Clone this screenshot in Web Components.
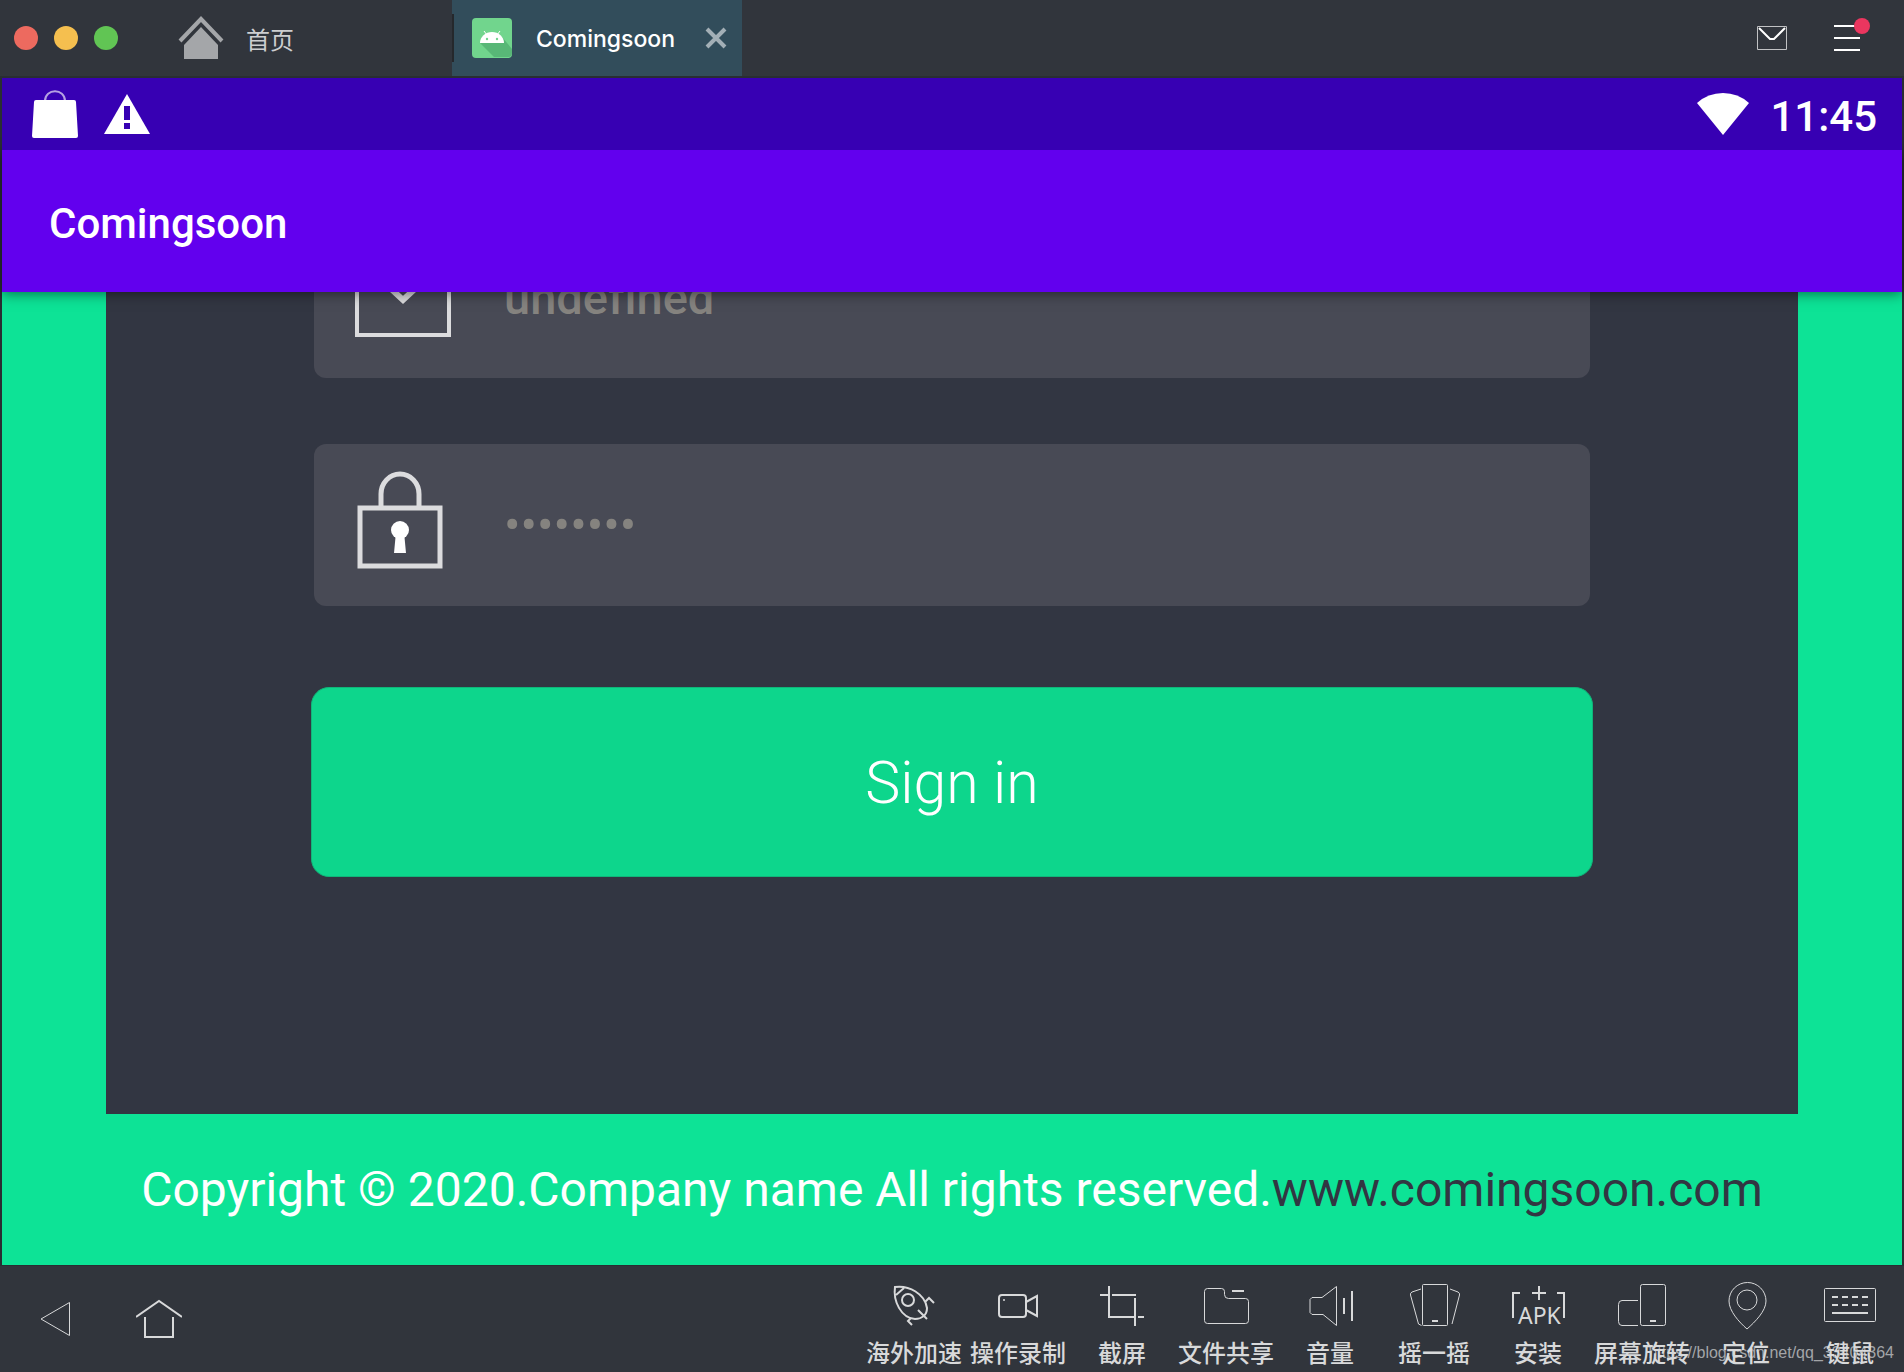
<!DOCTYPE html>
<html lang="zh-CN">
<head>
<meta charset="utf-8">
<title>Comingsoon</title>
<style>
body{
    margin: 0;
    background: #31353c;
    font-family: Roboto, "Noto Sans CJK SC", sans-serif;
}
</style>
</head>
<body>
<emulator-window>
    <title-bar slot="top"></title-bar>
    <status-bar slot="screen" time="11:45"></status-bar>
    <app-bar slot="screen">Comingsoon</app-bar>
    <login-page slot="screen"></login-page>
    <tool-bar slot="bottom"></tool-bar>
</emulator-window>

<script>
class EmulatorWindow extends HTMLElement{
    constructor(){
        super()
        this.attachShadow({mode: 'open'})
        this.shadowRoot.innerHTML = `
        <style>
        :host{
            display: flex;
            flex-direction: column;
            height: 100vh;
            overflow: hidden;
        }
        .screen{
            flex: 1;
            min-height: 0;
            display: flex;
            flex-direction: column;
            border: 2px solid #292e33;
            border-bottom-width: 1px;
        }
        </style>
        <slot name="top"></slot>
        <main class="screen"><slot name="screen"></slot></main>
        <slot name="bottom"></slot>
        `
    }
}

class TitleBar extends HTMLElement{
    constructor(){
        super()
        this.attachShadow({mode: 'open'})
        this.shadowRoot.innerHTML = `
        <style>
        :host{
            display: flex;
            height: 76px;
            flex: none;
            background: #31353c;
            color: #cdced0;
            font-size: 24px;
        }
        button{
            border: 0;
            padding: 0;
            background: none;
            color: inherit;
            font: inherit;
            display: flex;
            align-items: center;
        }
        svg{ display: block; flex: none; }
        .lights{
            display: flex;
            align-items: center;
            gap: 16px;
            padding-left: 14px;
            width: 164px;
        }
        .lights button{
            width: 24px;
            height: 24px;
            border-radius: 50%;
        }
        .red{ background: #ed6a5f; }
        .yellow{ background: #f5bf4f; }
        .green{ background: #61c554; }
        .home{ width: 274px; gap: 22px; }
        .tab{
            display: flex;
            align-items: center;
            justify-content: space-between;
            box-sizing: border-box;
            width: 290px;
            padding: 0 12px 0 20px;
            background: linear-gradient(#25282c, #25282c) left center / 2px 48px no-repeat #324d5b;
            color: #fff;
            font: 500 23px/28px Inter, sans-serif;
        }
        .tab .name{ gap: 24px; }
        .tab .name span{ padding-top: 2px; }
        .side{
            display: flex;
            gap: 46px;
            margin-left: auto;
            padding-right: 33px;
        }
        </style>
        <div class="lights">
            <button class="red" aria-label="关闭"></button>
            <button class="yellow" aria-label="最小化"></button>
            <button class="green" aria-label="全屏"></button>
        </div>
        <button class="home">
            <svg width="46" height="44" viewBox="0 0 46 44"><path d="M2 25 23 3l21 22" fill="none" stroke="#a4a6a9" stroke-width="4"/><path d="M23 11 6 29v14h34V29z" fill="#a4a6a9"/></svg>
            首页
        </button>
        <div class="tab">
            <button class="name">
                <svg width="40" height="40" viewBox="0 0 40 40"><rect width="40" height="40" rx="4" fill="#71d58d"/><path d="M8 25 22 39h14q4 0 4-4V31L30 19z" fill="#58b777"/><path d="M8 25a12 11 0 0 1 24 0z" fill="#fff"/><path d="M12 13l3 4M28 13l-3 4" stroke="#fff" stroke-width="1"/><circle cx="15" cy="21" r="1.2" fill="#71d58d"/><circle cx="25" cy="21" r="1.2" fill="#71d58d"/></svg>
                <span>Comingsoon</span>
            </button>
            <button aria-label="关闭标签">
                <svg width="28" height="28" viewBox="0 0 28 28"><path d="M5 5l18 18M23 5 5 23" stroke="#a3afb6" stroke-width="4"/></svg>
            </button>
        </div>
        <div class="side">
            <button aria-label="消息">
                <svg width="30" height="24" viewBox="0 0 30 24" fill="none"><path d="M.5.5h29v23H.5z" stroke="#c1c2c4"/><path d="m2 2 11 11h4L28 2" stroke="#fff" stroke-width="2"/></svg>
            </button>
            <button aria-label="菜单">
                <svg width="38" height="42" viewBox="0 0 38 42"><path d="M1 9h26M1 21h26M1 33h26" stroke="#fff" stroke-width="2"/><circle cx="29" cy="9" r="8" fill="#eb365f"/></svg>
            </button>
        </div>
        `
    }
}

class StatusBar extends HTMLElement{
    constructor(){
        super()
        this.attachShadow({mode: 'open'})
        this.time = this.getAttribute("time")
        this.shadowRoot.innerHTML = `
        <style>
        :host{
            display: flex;
            flex: none;
            align-items: center;
            justify-content: space-between;
            height: 72px;
            padding: 0 25px 0 30px;
            background: #3700b3;
            color: #fff;
            font-size: 42px;
            font-weight: 500;
            position: relative;
            z-index: 2;
        }
        div{ display: flex; align-items: center; gap: 26px; }
        .right{ gap: 21px; }
        .time{ padding-top: 4px; }
        </style>
        <div>
            <svg width="46" height="48" viewBox="0 0 46 48"><path d="M13 11C13-2 33-2 33 11" fill="none" stroke="#b5a0e2" stroke-width="2"/><path d="M4 10h38q2 0 2 2l2 34q0 2-2 2H2q-2 0-2-2l2-34q0-2 2-2z" fill="#fff"/></svg>
            <svg width="46" height="42" viewBox="0 0 46 42"><path d="M23 1 46 41H0z" fill="#fff"/><path d="M20 13h6v14h-6zM20 30h6v6h-6z" fill="#3700b3"/></svg>
        </div>
        <div class="right">
            <svg width="52" height="44" viewBox="0 0 52 44"><path d="M0 11Q11 1 26 1t26 10L26 43z" fill="#fff"/></svg>
            <span class="time">${this.time}</span>
        </div>
        `
    }
}

class AppBar extends HTMLElement{
    constructor(){
        super()
        this.attachShadow({mode: 'open'})
        this.shadowRoot.innerHTML = `
        <style>
        :host{
            display: flex;
            flex: none;
            align-items: center;
            height: 142px;
            padding: 0 47px;
            background: #6200ee;
            color: #fff;
            box-shadow: 0 2px 12px rgba(0, 0, 0, .5);
            position: relative;
            z-index: 1;
        }
        h1{
            margin: 0;
            padding-top: 4px;
            font-size: 42px;
            font-weight: 500;
        }
        </style>
        <h1><slot></slot></h1>
        `
    }
}

class FormField extends HTMLElement{
    constructor(){
        super()
        this.attachShadow({mode: 'open'})
        this.type = this.getAttribute("type")
        this.label = this.getAttribute("label")
        this.value = this.getAttribute("value")
        this.shadowRoot.innerHTML = `
        <style>
        :host{ display: block; margin: 0 3px; }
        label{
            display: flex;
            align-items: center;
            gap: 50px;
            height: 162px;
            padding: 0 40px;
            background: #484a55;
            border-radius: 12px;
        }
        input{
            flex: 1;
            min-width: 0;
            border: 0;
            padding: 0;
            outline: 0;
            background: none;
            color: #85837f;
            font: 500 47px Roboto, sans-serif;
            font-variant-ligatures: none;
        }
        input[type=password]{ font-weight: 400; font-size: 49px; }
        </style>
        <label>
            <slot></slot>
            <input type="${this.type}" aria-label="${this.label}" value="${this.value}">
        </label>
        `
    }
}

class LoginPage extends HTMLElement{
    constructor(){
        super()
        this.attachShadow({mode: 'open'})
        // content sticks to the bottom, the first field scrolls under the app bar
        this.shadowRoot.innerHTML = `
        <style>
        :host{
            flex: 1;
            min-height: 0;
            overflow: hidden;
            display: flex;
            flex-direction: column;
            justify-content: flex-end;
            background: #0de396;
        }
        form{
            flex: none;
            margin: 0 104px;
            padding: 0 205px 237px;
            background: #323642;
            display: flex;
            flex-direction: column;
            gap: 66px;
        }
        form svg{ display: block; flex: none; }
        .submit{
            height: 190px;
            margin-top: 15px;
            border: 1px solid #10b67a;
            border-radius: 18px;
            background: #0dd68c;
            color: #fff;
            font: 300 59px Roboto, sans-serif;
        }
        footer{
            flex: none;
            display: flex;
            justify-content: center;
            align-items: center;
            height: 151px;
            color: #fff;
            font-size: 48px;
            white-space: nowrap;
        }
        a{ color: #323642; text-decoration: none; }
        </style>
        <form>
            <form-field type="text" label="用户名" value="undefined">
                <svg width="100" height="92" viewBox="0 0 100 92"><path d="M3 4h92v80H3z" fill="none" stroke="#dcdcde" stroke-width="4"/><path d="m3 6 46 43L95 6" fill="none" stroke="#dcdcde" stroke-width="6"/></svg>
            </form-field>
            <form-field type="password" label="密码" value="password">
                <svg width="100" height="108" viewBox="0 0 100 108"><g fill="none" stroke="#dcdcde" stroke-width="5"><path d="M6 37h80v58H6zM27 37V23a19 20 0 0 1 38 0v14"/></g><circle cx="46" cy="59" r="9" fill="#fff"/><path d="M42 61h8l2 21H40z" fill="#fff"/></svg>
            </form-field>
            <button class="submit" type="button">Sign in</button>
        </form>
        <footer>Copyright © 2020.Company name All rights reserved.<a href="#">www.comingsoon.com</a></footer>
        `
    }
}

class ToolItem extends HTMLElement{
    constructor(){
        super()
        this.attachShadow({mode: 'open'})
        this.label = this.getAttribute("label")
        this.shadowRoot.innerHTML = `
        <style>
        :host{ display: block; width: 104px; }
        button{
            display: flex;
            flex-direction: column;
            align-items: center;
            gap: 4px;
            width: 100%;
            border: 0;
            padding: 0;
            background: none;
            color: #d8d9da;
            font: 500 24px/36px "Noto Sans CJK SC", sans-serif;
            white-space: nowrap;
        }
        </style>
        <button><slot></slot>${this.label}</button>
        `
    }
}

class ToolBar extends HTMLElement{
    constructor(){
        super()
        this.attachShadow({mode: 'open'})
        this.shadowRoot.innerHTML = `
        <style>
        :host{
            display: flex;
            flex: none;
            height: 106px;
            background: #31353c;
            position: relative;
        }
        svg{
            display: block;
            fill: none;
            stroke: #d8d9da;
            stroke-width: 2;
        }
        .thin{ stroke-width: 1; }
        nav{
            display: flex;
            align-items: center;
            gap: 65px;
            padding-left: 40px;
        }
        nav button{ border: 0; padding: 0; background: none; }
        .tools{
            display: flex;
            margin-left: auto;
            padding: 12px 2px 0 0;
        }
        text{
            font: 23px "Noto Sans", sans-serif;
            fill: #d8d9da;
            stroke: none;
        }
        .mark{
            position: absolute;
            right: 10px;
            bottom: 10px;
            font: 16px/18px "Liberation Sans", sans-serif;
            color: rgba(216, 217, 218, .7);
        }
        </style>
        <nav>
            <button aria-label="返回"><svg class="thin" width="31" height="36" viewBox="0 0 31 36"><path d="M1 18 29.5 1.500v33z"/></svg></button>
            <button aria-label="主页"><svg width="46" height="40" viewBox="0 0 46 40"><path d="M0 18 23 2l23 16M9 18v20h28V18"/></svg></button>
        </nav>
        <div class="tools">
            <tool-item label="海外加速"><svg width="56" height="52" viewBox="0 0 56 52"><path d="M9 9c14-2 30 7 32 21 0 7-5 11-12 11C15 40 7 23 9 9zM10 17l8-7"/><circle cx="22" cy="22" r="6"/><path d="M39 24l4-4 5 5M32 32l9 9M25 40l-3 3 4 4"/></svg></tool-item>
            <tool-item label="操作录制"><svg width="56" height="52" viewBox="0 0 56 52"><rect x="9" y="17" width="27" height="22" rx="3"/><path d="M36 24l11-6v20l-11-6"/><circle cx="14" cy="22" r="1" stroke="none" fill="#d8d9da"/></svg></tool-item>
            <tool-item label="截屏"><svg width="56" height="52" viewBox="0 0 56 52"><path d="M6 17h8M18 17h24M15 8v31h27M41 20v28M44 39h6"/></svg></tool-item>
            <tool-item label="文件共享"><svg class="thin" width="56" height="52" viewBox="0 0 56 52"><path d="M9.500 10.500h14q3 0 3 3v3q0 4 4 4h17q3 0 3 3v19q0 3-3 3h-38q-3 0-3-3v-29q0-3 3-3z"/><path d="M34 13h12" stroke-width="2"/></svg></tool-item>
            <tool-item label="音量"><svg class="thin" width="56" height="52" viewBox="0 0 56 52"><path d="M10 19.500h10L34.500 8.500v39L21 36.500H10l-2-2v-13z"/><path d="M42 20v16M50 13v30" stroke-width="2"/></svg></tool-item>
            <tool-item label="摇一摇"><svg class="thin" width="56" height="52" viewBox="0 0 56 52"><rect x="16.500" y="6.500" width="25" height="41" rx="1"/><path d="M15 11 6 14q-2 1-1.500 3l8 29 3 1.500M44 11l8 3q2 1 1.500 3L46 46"/><path d="M26 43h6" stroke-width="2"/></svg></tool-item>
            <tool-item label="安装"><svg width="56" height="52" viewBox="0 0 56 52"><path d="M10 15H3v25M47 15h7v25M22 15h14M29 8v14"/><text x="8" y="46">APK</text></svg></tool-item>
            <tool-item label="屏幕旋转"><svg class="thin" width="56" height="52" viewBox="0 0 56 52"><path d="M24 22.500H8q-3.500 0-3.500 4v17q0 4 3.500 4h16"/><rect x="26.500" y="6.500" width="25" height="41" rx="2"/><path d="M36 43h6" stroke-width="2"/></svg></tool-item>
            <tool-item label="定位"><svg class="thin" width="56" height="52" viewBox="0 0 56 52"><path d="M29 51C21 44 11 33 11 23a18 18 0 0 1 37 0c0 10-11 21-19 28z"/><circle cx="29" cy="22" r="10"/></svg></tool-item>
            <tool-item label="键鼠"><svg class="thin" width="56" height="52" viewBox="0 0 56 52"><rect x="2.500" y="10.500" width="51" height="33" rx="1"/><path d="M10 19h36M10 27h36" stroke-width="2" stroke-dasharray="6 4"/><path d="M10 35h36" stroke-width="2"/></svg></tool-item>
        </div>
        <span class="mark">https://blog.csdn.net/qq_33404364</span>
        `
    }
}

window.customElements.define("emulator-window", EmulatorWindow)
window.customElements.define("title-bar", TitleBar)
window.customElements.define("status-bar", StatusBar)
window.customElements.define("app-bar", AppBar)
window.customElements.define("form-field", FormField)
window.customElements.define("login-page", LoginPage)
window.customElements.define("tool-item", ToolItem)
window.customElements.define("tool-bar", ToolBar)
</script>
</body>
</html>
